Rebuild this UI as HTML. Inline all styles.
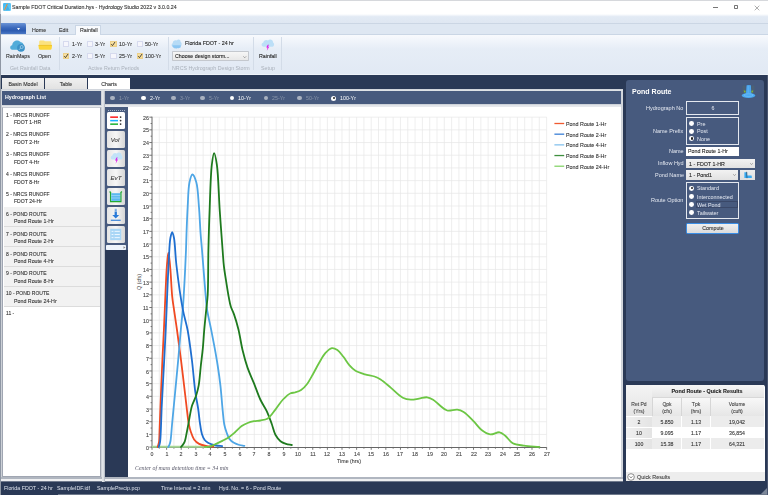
<!DOCTYPE html><html><head><meta charset="utf-8"><style>html,body{margin:0;padding:0;width:768px;height:495px;overflow:hidden;position:relative;background:#2a3956}</style></head><body><div style="position:absolute;left:0px;top:0px;width:768px;height:14px;background:#fff;border-top:0.8px solid #d6d8dc;border-left:0.8px solid #c8ccd2;box-sizing:border-box"></div>
<div style="position:absolute;left:0px;top:14px;width:768px;height:9px;background:linear-gradient(#fff 0%,#e2eaf4 30%,#dfe7f2 100%)"></div>
<svg style="position:absolute;left:3px;top:2.6px" width="8" height="8" viewBox="0 0 8 8"><defs><linearGradient id="ig" x1="0" y1="0" x2="1" y2="1"><stop offset="0" stop-color="#3fb6f2"/><stop offset="1" stop-color="#6fd0f8"/></linearGradient></defs><rect x="0" y="0" width="8" height="8" rx="1.2" fill="url(#ig)"/><path d="M4.4 2.6 L7 7.2 L2.6 7.2 Z" fill="#2a9ee0" opacity="0.55"/><path d="M1.7 6.8 L4.2 1.2" stroke="#f08a2a" stroke-width="1" stroke-linecap="round"/></svg>
<div style="position:absolute;left:12px;top:4.67px;font-size:5.27px;line-height:5.27px;color:#333;font-weight:normal;white-space:pre;font-family:'Liberation Sans', sans-serif;will-change:transform;-webkit-text-stroke:0.1px #333;">Sample FDOT Critical Duration.hys - Hydrology Studio 2022 v 3.0.0.24</div>
<div style="position:absolute;left:713px;top:6.5px;width:5px;height:0.6px;background:#777"></div>
<div style="position:absolute;left:734px;top:5px;width:4.4px;height:4.4px;border:0.6px solid #777;box-sizing:border-box;border-radius:0.8px"></div>
<svg style="position:absolute;left:754px;top:4.5px" width="6" height="6" viewBox="0 0 6 6"><path d="M0.7 0.7 L5.3 5.3 M5.3 0.7 L0.7 5.3" stroke="#777" stroke-width="0.6"/></svg>
<div style="position:absolute;left:0px;top:23px;width:768px;height:12px;background:#dee7f2;border-top:0.7px solid #cbd6e4;box-sizing:border-box"></div>
<div style="position:absolute;left:0px;top:34.3px;width:768px;height:0.8px;background:#cad6e5"></div>
<div style="position:absolute;left:0px;top:23.2px;width:26px;height:10.5px;background:linear-gradient(#6a93d6 0%,#3a68bb 45%,#2d5bb0 70%,#4a77c5 100%);border-radius:0 1.5px 0 0"></div>
<svg style="position:absolute;left:16.8px;top:28px" width="3" height="2.2" viewBox="0 0 3 2.2"><path d="M0 0 L3 0 L1.5 2.2 Z" fill="#fff"/></svg>
<div style="position:absolute;left:32px;top:28.25px;font-size:5.3px;line-height:5.3px;color:#333;font-weight:normal;white-space:pre;font-family:'Liberation Sans', sans-serif;will-change:transform;-webkit-text-stroke:0.1px #333;">Home</div>
<div style="position:absolute;left:58.8px;top:28.25px;font-size:5.3px;line-height:5.3px;color:#333;font-weight:normal;white-space:pre;font-family:'Liberation Sans', sans-serif;will-change:transform;-webkit-text-stroke:0.1px #333;">Edit</div>
<div style="position:absolute;left:75px;top:24.5px;width:26.3px;height:10.8px;background:#f8fafd;border:0.6px solid #cad6e5;border-bottom:none;box-sizing:border-box"></div>
<div style="position:absolute;left:79.5px;top:28.25px;font-size:5.3px;line-height:5.3px;color:#333;font-weight:normal;white-space:pre;font-family:'Liberation Sans', sans-serif;will-change:transform;-webkit-text-stroke:0.1px #333;">Rainfall</div>
<div style="position:absolute;left:0px;top:35px;width:768px;height:40px;background:linear-gradient(#f8fafd 0%,#e6edf6 35%,#e1e9f4 100%)"></div>
<div style="position:absolute;left:0px;top:74.4px;width:768px;height:0.6px;background:#eef3f9"></div>
<div style="position:absolute;left:59px;top:37px;width:0.6px;height:33px;background:#d3dce8"></div>
<div style="position:absolute;left:167.7px;top:37px;width:0.6px;height:33px;background:#d3dce8"></div>
<div style="position:absolute;left:253.3px;top:37px;width:0.6px;height:33px;background:#d3dce8"></div>
<div style="position:absolute;left:281.2px;top:37px;width:0.6px;height:33px;background:#d3dce8"></div>
<svg style="position:absolute;left:9px;top:39px" width="17" height="14" viewBox="0 0 17 14"><path d="M3.2 10.8 C0.6 10.8 0.4 6.6 3.2 6.2 C3.4 2.2 8.6 -0.2 11.8 3.2 C13.6 3.4 14.8 5 14.6 7 L11 10.8 Z" fill="#52acd9"/><circle cx="12" cy="8.8" r="3.9" fill="#3b92c8"/><circle cx="12.7" cy="8" r="1.5" fill="none" stroke="#cfe9f7" stroke-width="0.55"/><path d="M11.6 9.1 L10 10.8" stroke="#cfe9f7" stroke-width="0.6"/></svg>
<div style="position:absolute;left:5.5px;top:54.15px;font-size:5.3px;line-height:5.3px;color:#333;font-weight:normal;white-space:pre;font-family:'Liberation Sans', sans-serif;will-change:transform;-webkit-text-stroke:0.1px #333;">RainMaps</div>
<svg style="position:absolute;left:37.5px;top:39.5px" width="14.5" height="10.5" viewBox="0 0 14.5 10.5"><path d="M1.2 1.6 Q1.2 0.4 2.4 0.4 L5.6 0.4 Q6.4 0.4 6.8 1.2 L12.2 1.2 Q13.4 1.2 13.4 2.4 L13.4 6 L1.2 6 Z" fill="#fbe27e"/><path d="M0.4 5.6 Q0.4 5 1 5 L13.6 5 Q14.2 5 14.1 5.6 L13.6 8.8 Q13.4 9.8 12.4 9.8 L2.2 9.8 Q1.1 9.8 0.9 8.8 Z" fill="#fcd63a"/><path d="M0.6 5.4 L13.9 5.4" stroke="#e8bc2a" stroke-width="0.7"/></svg>
<div style="position:absolute;left:38.2px;top:54.15px;font-size:5.3px;line-height:5.3px;color:#333;font-weight:normal;white-space:pre;font-family:'Liberation Sans', sans-serif;will-change:transform;-webkit-text-stroke:0.1px #333;">Open</div>
<div style="position:absolute;left:10px;top:65.75px;font-size:5.3px;line-height:5.3px;color:#a9b0ba;font-weight:normal;white-space:pre;font-family:'Liberation Sans', sans-serif;will-change:transform;-webkit-text-stroke:0.0px #a9b0ba;">Get Rainfall Data</div>
<div style="position:absolute;left:63px;top:40.65px;width:6.2px;height:6.2px;background:#f6f6fc;border:0.6px solid #d6daee;box-sizing:border-box"></div>
<div style="position:absolute;left:71.6px;top:41.70px;font-size:5.3px;line-height:5.3px;color:#333;font-weight:normal;white-space:pre;font-family:'Liberation Sans', sans-serif;will-change:transform;-webkit-text-stroke:0.1px #333;">1-Yr</div>
<div style="position:absolute;left:87px;top:40.65px;width:6.2px;height:6.2px;background:#f6f6fc;border:0.6px solid #d6daee;box-sizing:border-box"></div>
<div style="position:absolute;left:94.75px;top:41.70px;font-size:5.3px;line-height:5.3px;color:#333;font-weight:normal;white-space:pre;font-family:'Liberation Sans', sans-serif;will-change:transform;-webkit-text-stroke:0.1px #333;">3-Yr</div>
<div style="position:absolute;left:110.4px;top:40.65px;width:6.2px;height:6.2px;background:linear-gradient(#f8e2a6,#f4d890);border:0.5px solid #ecd08a;box-sizing:border-box"></div>
<svg style="position:absolute;left:110.4px;top:40.75px" width="6" height="6" viewBox="0 0 6 6"><path d="M1.2 3.2 L2.5 4.6 L5 1" fill="none" stroke="#222" stroke-width="0.8"/></svg>
<div style="position:absolute;left:118.5px;top:41.70px;font-size:5.3px;line-height:5.3px;color:#333;font-weight:normal;white-space:pre;font-family:'Liberation Sans', sans-serif;will-change:transform;-webkit-text-stroke:0.1px #333;">10-Yr</div>
<div style="position:absolute;left:137px;top:40.65px;width:6.2px;height:6.2px;background:#f6f6fc;border:0.6px solid #d6daee;box-sizing:border-box"></div>
<div style="position:absolute;left:144.75px;top:41.70px;font-size:5.3px;line-height:5.3px;color:#333;font-weight:normal;white-space:pre;font-family:'Liberation Sans', sans-serif;will-change:transform;-webkit-text-stroke:0.1px #333;">50-Yr</div>
<div style="position:absolute;left:63px;top:53.3px;width:6.2px;height:6.2px;background:linear-gradient(#f8e2a6,#f4d890);border:0.5px solid #ecd08a;box-sizing:border-box"></div>
<svg style="position:absolute;left:63px;top:53.4px" width="6" height="6" viewBox="0 0 6 6"><path d="M1.2 3.2 L2.5 4.6 L5 1" fill="none" stroke="#222" stroke-width="0.8"/></svg>
<div style="position:absolute;left:71.6px;top:54.35px;font-size:5.3px;line-height:5.3px;color:#333;font-weight:normal;white-space:pre;font-family:'Liberation Sans', sans-serif;will-change:transform;-webkit-text-stroke:0.1px #333;">2-Yr</div>
<div style="position:absolute;left:87px;top:53.3px;width:6.2px;height:6.2px;background:#f6f6fc;border:0.6px solid #d6daee;box-sizing:border-box"></div>
<div style="position:absolute;left:94.75px;top:54.35px;font-size:5.3px;line-height:5.3px;color:#333;font-weight:normal;white-space:pre;font-family:'Liberation Sans', sans-serif;will-change:transform;-webkit-text-stroke:0.1px #333;">5-Yr</div>
<div style="position:absolute;left:110.4px;top:53.3px;width:6.2px;height:6.2px;background:#f6f6fc;border:0.6px solid #d6daee;box-sizing:border-box"></div>
<div style="position:absolute;left:118.5px;top:54.35px;font-size:5.3px;line-height:5.3px;color:#333;font-weight:normal;white-space:pre;font-family:'Liberation Sans', sans-serif;will-change:transform;-webkit-text-stroke:0.1px #333;">25-Yr</div>
<div style="position:absolute;left:137px;top:53.3px;width:6.2px;height:6.2px;background:linear-gradient(#f8e2a6,#f4d890);border:0.5px solid #ecd08a;box-sizing:border-box"></div>
<svg style="position:absolute;left:137px;top:53.4px" width="6" height="6" viewBox="0 0 6 6"><path d="M1.2 3.2 L2.5 4.6 L5 1" fill="none" stroke="#222" stroke-width="0.8"/></svg>
<div style="position:absolute;left:144.75px;top:54.35px;font-size:5.3px;line-height:5.3px;color:#333;font-weight:normal;white-space:pre;font-family:'Liberation Sans', sans-serif;will-change:transform;-webkit-text-stroke:0.1px #333;">100-Yr</div>
<div style="position:absolute;left:88px;top:65.75px;font-size:5.3px;line-height:5.3px;color:#a9b0ba;font-weight:normal;white-space:pre;font-family:'Liberation Sans', sans-serif;will-change:transform;-webkit-text-stroke:0.0px #a9b0ba;">Active Return Periods</div>
<svg style="position:absolute;left:171.3px;top:38.5px" width="11" height="10.5" viewBox="0 0 11 10.5"><path d="M2.2 7.8 C0.2 7.6 0.2 4.6 1.8 4.2 C1.6 1.6 4.4 0.4 5.8 1.6 C7 -0.2 9.8 0.6 9.6 3 C11 3.4 11 6.6 9.4 7.8 Z" fill="#b6dbf6"/><path d="M1.4 6.2 L9.8 6.2 L9.6 8.2 Q9.2 9.2 8.4 8.8 Q7.6 9.8 6.6 9 Q5.6 10 4.6 9.2 Q3.6 9.8 3 8.8 Q2 9 1.8 8 Z" fill="#8cc6f2"/></svg>
<div style="position:absolute;left:184.6px;top:40.75px;font-size:5.3px;line-height:5.3px;color:#222;font-weight:normal;white-space:pre;font-family:'Liberation Sans', sans-serif;will-change:transform;-webkit-text-stroke:0.1px #222;">Florida FDOT - 24 hr</div>
<div style="position:absolute;left:172.4px;top:51.4px;width:76.4px;height:9.6px;background:linear-gradient(#f6f6f6,#e8e8e8);border:0.6px solid #c4c8ce;box-sizing:border-box;border-radius:0.8px"></div>
<div style="position:absolute;left:175px;top:54.25px;font-size:5.3px;line-height:5.3px;color:#222;font-weight:normal;white-space:pre;font-family:'Liberation Sans', sans-serif;will-change:transform;-webkit-text-stroke:0.1px #222;">Choose design storm...</div>
<svg style="position:absolute;left:243.2px;top:55.6px" width="3.5" height="2.2" viewBox="0 0 3.5 2.2"><path d="M0.3 0.3 L1.75 1.8 L3.2 0.3" fill="none" stroke="#777" stroke-width="0.6"/></svg>
<div style="position:absolute;left:172.3px;top:65.75px;font-size:5.3px;line-height:5.3px;color:#a9b0ba;font-weight:normal;white-space:pre;font-family:'Liberation Sans', sans-serif;will-change:transform;-webkit-text-stroke:0.0px #a9b0ba;">NRCS Hydrograph Design Storm</div>
<svg style="position:absolute;left:261px;top:38.5px" width="13.5" height="12.5" viewBox="0 0 13.5 12.5"><path d="M2.6 7.8 C0 7.6 0 4.2 2.2 3.8 C2.4 1.2 5.6 0.2 7 1.6 C8.6 -0.6 12.4 0.6 12 3.6 C13.6 4.2 13.4 7.6 11.4 7.8 Z" fill="#bcdff7"/><path d="M6.8 5.8 L5.2 8.6 L6.6 8.6 L5.8 11.8 L8.2 7.8 L6.8 7.8 L8 5.8 Z" fill="#e012e8"/></svg>
<div style="position:absolute;left:258.8px;top:54.35px;font-size:5.3px;line-height:5.3px;color:#222;font-weight:normal;white-space:pre;font-family:'Liberation Sans', sans-serif;will-change:transform;-webkit-text-stroke:0.1px #222;">Rainfall</div>
<div style="position:absolute;left:261px;top:65.75px;font-size:5.3px;line-height:5.3px;color:#a9b0ba;font-weight:normal;white-space:pre;font-family:'Liberation Sans', sans-serif;will-change:transform;-webkit-text-stroke:0.0px #a9b0ba;">Setup</div>
<div style="position:absolute;left:0px;top:75px;width:768px;height:420px;background:#2a3956"></div>
<div style="position:absolute;left:1.8px;top:78px;width:41.9px;height:11px;background:linear-gradient(#f0f0f0,#e2e2e2)"></div>
<div style="position:absolute;left:-77.25px;width:200px;text-align:center;top:81.95px;font-size:5.3px;line-height:5.3px;color:#333;font-weight:normal;white-space:pre;font-family:'Liberation Sans', sans-serif;will-change:transform;-webkit-text-stroke:0.1px #333;">Basin Model</div>
<div style="position:absolute;left:45px;top:78px;width:41.6px;height:11px;background:linear-gradient(#f0f0f0,#e2e2e2)"></div>
<div style="position:absolute;left:-34.2px;width:200px;text-align:center;top:81.95px;font-size:5.3px;line-height:5.3px;color:#333;font-weight:normal;white-space:pre;font-family:'Liberation Sans', sans-serif;will-change:transform;-webkit-text-stroke:0.1px #333;">Table</div>
<div style="position:absolute;left:88px;top:78px;width:41.8px;height:11px;background:#fff"></div>
<div style="position:absolute;left:8.900000000000006px;width:200px;text-align:center;top:81.95px;font-size:5.3px;line-height:5.3px;color:#333;font-weight:normal;white-space:pre;font-family:'Liberation Sans', sans-serif;will-change:transform;-webkit-text-stroke:0.1px #333;">Charts</div>
<div style="position:absolute;left:0px;top:88.7px;width:623px;height:2.4px;background:linear-gradient(#c4c9d1,#e4e7eb 60%,#d6dadf)"></div>
<div style="position:absolute;left:1.8px;top:91px;width:100px;height:13.7px;background:#475a7e"></div>
<div style="position:absolute;left:5px;top:95.45px;font-size:5.3px;line-height:5.3px;color:#fff;font-weight:bold;white-space:pre;font-family:'Liberation Sans', sans-serif;will-change:transform;-webkit-text-stroke:0.0px #fff;">Hydrograph List</div>
<div style="position:absolute;left:101.3px;top:91px;width:3.3px;height:390.5px;background:linear-gradient(90deg,#c4c9d1,#eceef1 50%,#a9b0bb)"></div>
<div style="position:absolute;left:0px;top:104.5px;width:102px;height:2.5px;background:linear-gradient(#c4c9d1,#e2e5e9 50%,#e8eaed)"></div>
<div style="position:absolute;left:0px;top:88.7px;width:1.8px;height:393px;background:linear-gradient(90deg,#a9b0bb,#d8dbe0)"></div>
<div style="position:absolute;left:1.8px;top:107px;width:99.7px;height:370px;background:#fff;border:0.8px solid #a0a6b2;border-top-color:#c8ccd3;box-sizing:border-box"></div>
<div style="position:absolute;left:6px;top:112.60px;font-size:5.0px;line-height:5.0px;color:#333;font-weight:normal;white-space:pre;font-family:'Liberation Sans', sans-serif;will-change:transform;-webkit-text-stroke:0.1px #333;">1 - NRCS RUNOFF</div>
<div style="position:absolute;left:13.7px;top:119.95px;font-size:5.1px;line-height:5.1px;color:#333;font-weight:normal;white-space:pre;font-family:'Liberation Sans', sans-serif;will-change:transform;-webkit-text-stroke:0.1px #333;">FDOT 1-HR</div>
<div style="position:absolute;left:6px;top:132.45px;font-size:5.0px;line-height:5.0px;color:#333;font-weight:normal;white-space:pre;font-family:'Liberation Sans', sans-serif;will-change:transform;-webkit-text-stroke:0.1px #333;">2 - NRCS RUNOFF</div>
<div style="position:absolute;left:13.7px;top:139.80px;font-size:5.1px;line-height:5.1px;color:#333;font-weight:normal;white-space:pre;font-family:'Liberation Sans', sans-serif;will-change:transform;-webkit-text-stroke:0.1px #333;">FDOT 2-Hr</div>
<div style="position:absolute;left:6px;top:152.30px;font-size:5.0px;line-height:5.0px;color:#333;font-weight:normal;white-space:pre;font-family:'Liberation Sans', sans-serif;will-change:transform;-webkit-text-stroke:0.1px #333;">3 - NRCS RUNOFF</div>
<div style="position:absolute;left:13.7px;top:159.65px;font-size:5.1px;line-height:5.1px;color:#333;font-weight:normal;white-space:pre;font-family:'Liberation Sans', sans-serif;will-change:transform;-webkit-text-stroke:0.1px #333;">FDOT 4-Hr</div>
<div style="position:absolute;left:6px;top:172.15px;font-size:5.0px;line-height:5.0px;color:#333;font-weight:normal;white-space:pre;font-family:'Liberation Sans', sans-serif;will-change:transform;-webkit-text-stroke:0.1px #333;">4 - NRCS RUNOFF</div>
<div style="position:absolute;left:13.7px;top:179.50px;font-size:5.1px;line-height:5.1px;color:#333;font-weight:normal;white-space:pre;font-family:'Liberation Sans', sans-serif;will-change:transform;-webkit-text-stroke:0.1px #333;">FDOT 8-Hr</div>
<div style="position:absolute;left:6px;top:192.00px;font-size:5.0px;line-height:5.0px;color:#333;font-weight:normal;white-space:pre;font-family:'Liberation Sans', sans-serif;will-change:transform;-webkit-text-stroke:0.1px #333;">5 - NRCS RUNOFF</div>
<div style="position:absolute;left:13.7px;top:199.35px;font-size:5.1px;line-height:5.1px;color:#333;font-weight:normal;white-space:pre;font-family:'Liberation Sans', sans-serif;will-change:transform;-webkit-text-stroke:0.1px #333;">FDOT 24-Hr</div>
<div style="position:absolute;left:4px;top:207.4px;width:96px;height:19.83px;background:#f2f2f2;border-bottom:0.7px solid #dcdcdc;box-sizing:border-box"></div>
<div style="position:absolute;left:6px;top:211.85px;font-size:5.0px;line-height:5.0px;color:#333;font-weight:normal;white-space:pre;font-family:'Liberation Sans', sans-serif;will-change:transform;-webkit-text-stroke:0.1px #333;">6 - POND ROUTE</div>
<div style="position:absolute;left:13.7px;top:219.10px;font-size:5.3px;line-height:5.3px;color:#333;font-weight:normal;white-space:pre;font-family:'Liberation Sans', sans-serif;will-change:transform;-webkit-text-stroke:0.1px #333;">Pond Route 1-Hr</div>
<div style="position:absolute;left:4px;top:227.23000000000002px;width:96px;height:19.83px;background:#f2f2f2;border-bottom:0.7px solid #dcdcdc;box-sizing:border-box"></div>
<div style="position:absolute;left:6px;top:231.70px;font-size:5.0px;line-height:5.0px;color:#333;font-weight:normal;white-space:pre;font-family:'Liberation Sans', sans-serif;will-change:transform;-webkit-text-stroke:0.1px #333;">7 - POND ROUTE</div>
<div style="position:absolute;left:13.7px;top:238.95px;font-size:5.3px;line-height:5.3px;color:#333;font-weight:normal;white-space:pre;font-family:'Liberation Sans', sans-serif;will-change:transform;-webkit-text-stroke:0.1px #333;">Pond Route 2-Hr</div>
<div style="position:absolute;left:4px;top:247.06px;width:96px;height:19.83px;background:#f2f2f2;border-bottom:0.7px solid #dcdcdc;box-sizing:border-box"></div>
<div style="position:absolute;left:6px;top:251.55px;font-size:5.0px;line-height:5.0px;color:#333;font-weight:normal;white-space:pre;font-family:'Liberation Sans', sans-serif;will-change:transform;-webkit-text-stroke:0.1px #333;">8 - POND ROUTE</div>
<div style="position:absolute;left:13.7px;top:258.80px;font-size:5.3px;line-height:5.3px;color:#333;font-weight:normal;white-space:pre;font-family:'Liberation Sans', sans-serif;will-change:transform;-webkit-text-stroke:0.1px #333;">Pond Route 4-Hr</div>
<div style="position:absolute;left:4px;top:266.89px;width:96px;height:19.83px;background:#f2f2f2;border-bottom:0.7px solid #dcdcdc;box-sizing:border-box"></div>
<div style="position:absolute;left:6px;top:271.40px;font-size:5.0px;line-height:5.0px;color:#333;font-weight:normal;white-space:pre;font-family:'Liberation Sans', sans-serif;will-change:transform;-webkit-text-stroke:0.1px #333;">9 - POND ROUTE</div>
<div style="position:absolute;left:13.7px;top:278.65px;font-size:5.3px;line-height:5.3px;color:#333;font-weight:normal;white-space:pre;font-family:'Liberation Sans', sans-serif;will-change:transform;-webkit-text-stroke:0.1px #333;">Pond Route 8-Hr</div>
<div style="position:absolute;left:4px;top:286.72px;width:96px;height:19.83px;background:#f2f2f2;border-bottom:0.7px solid #dcdcdc;box-sizing:border-box"></div>
<div style="position:absolute;left:6px;top:291.25px;font-size:5.0px;line-height:5.0px;color:#333;font-weight:normal;white-space:pre;font-family:'Liberation Sans', sans-serif;will-change:transform;-webkit-text-stroke:0.1px #333;">10 - POND ROUTE</div>
<div style="position:absolute;left:13.7px;top:298.50px;font-size:5.3px;line-height:5.3px;color:#333;font-weight:normal;white-space:pre;font-family:'Liberation Sans', sans-serif;will-change:transform;-webkit-text-stroke:0.1px #333;">Pond Route 24-Hr</div>
<div style="position:absolute;left:6px;top:310.90px;font-size:5.0px;line-height:5.0px;color:#333;font-weight:normal;white-space:pre;font-family:'Liberation Sans', sans-serif;will-change:transform;-webkit-text-stroke:0.1px #333;">11 -</div>
<div style="position:absolute;left:0px;top:477px;width:102px;height:5.4px;background:linear-gradient(#b0b6c0 0%,#b0b6c0 35%,#eeeff1 45%,#eeeff1 72%,#2a3956 100%)"></div>
<div style="position:absolute;left:104.7px;top:91px;width:516.1px;height:13.4px;background:#475a7e"></div>
<div style="position:absolute;left:104.6px;top:104.4px;width:518.3px;height:2.6px;background:linear-gradient(#c4c9d1,#e2e5e9 50%,#e8eaed)"></div>
<div style="position:absolute;left:620.6px;top:91px;width:2.3px;height:390px;background:linear-gradient(90deg,#b8bec8,#eceef1 60%,#a9b0bb)"></div>
<div style="position:absolute;left:110.2px;top:95.7px;width:4.6px;height:4.6px;border-radius:50%;background:#a9b1c0"></div>
<div style="position:absolute;left:118.7px;top:96.05px;font-size:5.3px;line-height:5.3px;color:#8c97ab;font-weight:normal;white-space:pre;font-family:'Liberation Sans', sans-serif;will-change:transform;-webkit-text-stroke:0.0px #8c97ab;">1-Yr</div>
<div style="position:absolute;left:141.45px;top:95.7px;width:4.6px;height:4.6px;border-radius:50%;background:#fff"></div>
<div style="position:absolute;left:149.95px;top:96.05px;font-size:5.3px;line-height:5.3px;color:#fff;font-weight:normal;white-space:pre;font-family:'Liberation Sans', sans-serif;will-change:transform;-webkit-text-stroke:0.0px #fff;">2-Yr</div>
<div style="position:absolute;left:171.0px;top:95.7px;width:4.6px;height:4.6px;border-radius:50%;background:#a9b1c0"></div>
<div style="position:absolute;left:179.5px;top:96.05px;font-size:5.3px;line-height:5.3px;color:#8c97ab;font-weight:normal;white-space:pre;font-family:'Liberation Sans', sans-serif;will-change:transform;-webkit-text-stroke:0.0px #8c97ab;">3-Yr</div>
<div style="position:absolute;left:200.29999999999998px;top:95.7px;width:4.6px;height:4.6px;border-radius:50%;background:#a9b1c0"></div>
<div style="position:absolute;left:208.79999999999998px;top:96.05px;font-size:5.3px;line-height:5.3px;color:#8c97ab;font-weight:normal;white-space:pre;font-family:'Liberation Sans', sans-serif;will-change:transform;-webkit-text-stroke:0.0px #8c97ab;">5-Yr</div>
<div style="position:absolute;left:229.7px;top:95.7px;width:4.6px;height:4.6px;border-radius:50%;background:#fff"></div>
<div style="position:absolute;left:238.2px;top:96.05px;font-size:5.3px;line-height:5.3px;color:#fff;font-weight:normal;white-space:pre;font-family:'Liberation Sans', sans-serif;will-change:transform;-webkit-text-stroke:0.0px #fff;">10-Yr</div>
<div style="position:absolute;left:263.7px;top:95.7px;width:4.6px;height:4.6px;border-radius:50%;background:#a9b1c0"></div>
<div style="position:absolute;left:272.2px;top:96.05px;font-size:5.3px;line-height:5.3px;color:#8c97ab;font-weight:normal;white-space:pre;font-family:'Liberation Sans', sans-serif;will-change:transform;-webkit-text-stroke:0.0px #8c97ab;">25-Yr</div>
<div style="position:absolute;left:297.2px;top:95.7px;width:4.6px;height:4.6px;border-radius:50%;background:#a9b1c0"></div>
<div style="position:absolute;left:305.7px;top:96.05px;font-size:5.3px;line-height:5.3px;color:#8c97ab;font-weight:normal;white-space:pre;font-family:'Liberation Sans', sans-serif;will-change:transform;-webkit-text-stroke:0.0px #8c97ab;">50-Yr</div>
<div style="position:absolute;left:331.25px;top:95.5px;width:5px;height:5px;border-radius:50%;background:#fff"></div>
<div style="position:absolute;left:332.6px;top:96.85px;width:2.3px;height:2.3px;border-radius:50%;background:#222"></div>
<div style="position:absolute;left:339.95px;top:96.05px;font-size:5.3px;line-height:5.3px;color:#fff;font-weight:normal;white-space:pre;font-family:'Liberation Sans', sans-serif;will-change:transform;-webkit-text-stroke:0.0px #fff;">100-Yr</div>
<div style="position:absolute;left:104.5px;top:107px;width:23.2px;height:143.2px;background:#475a7e"></div>
<div style="position:absolute;left:107.5px;top:110px;width:17px;height:0;border-top:0.7px dotted #a8b4c8"></div>
<div style="position:absolute;left:107px;top:112px;width:17.5px;height:17px;background:#fff;border-radius:1.5px"></div>
<div style="position:absolute;left:107px;top:131px;width:17.5px;height:17px;background:linear-gradient(90deg,#e4e4e4,#f6f6f6 50%,#d6d6d6);border-radius:1.5px"></div>
<div style="position:absolute;left:107px;top:150px;width:17.5px;height:17px;background:linear-gradient(90deg,#e4e4e4,#f6f6f6 50%,#d6d6d6);border-radius:1.5px"></div>
<div style="position:absolute;left:107px;top:169px;width:17.5px;height:17px;background:linear-gradient(90deg,#e4e4e4,#f6f6f6 50%,#d6d6d6);border-radius:1.5px"></div>
<div style="position:absolute;left:107px;top:188px;width:17.5px;height:17px;background:linear-gradient(90deg,#e4e4e4,#f6f6f6 50%,#d6d6d6);border-radius:1.5px"></div>
<div style="position:absolute;left:107px;top:207px;width:17.5px;height:17px;background:linear-gradient(90deg,#e4e4e4,#f6f6f6 50%,#d6d6d6);border-radius:1.5px"></div>
<div style="position:absolute;left:107px;top:226px;width:17.5px;height:17px;background:linear-gradient(90deg,#e4e4e4,#f6f6f6 50%,#d6d6d6);border-radius:1.5px"></div>
<svg style="position:absolute;left:107px;top:112px" width="17.5" height="17" viewBox="0 0 17.5 17"><rect x="3.2" y="4.4" width="7.8" height="1.5" fill="#ff1a1a"/><rect x="3.2" y="7.9" width="7.8" height="1.5" fill="#1ab0ff"/><rect x="3.2" y="11.4" width="7.8" height="1.5" fill="#1ab030"/><circle cx="13.6" cy="5.1" r="0.9" fill="#333"/><circle cx="13.6" cy="8.6" r="0.9" fill="#333"/><circle cx="13.6" cy="12.1" r="0.9" fill="#333"/></svg>
<div style="position:absolute;left:15px;width:200px;text-align:center;top:137.40px;font-size:6.0px;line-height:6.0px;color:#3a3a3a;font-weight:normal;white-space:pre;font-family:'Liberation Sans', sans-serif;will-change:transform;-webkit-text-stroke:0.1px #3a3a3a;font-style:italic">Vol</div>
<svg style="position:absolute;left:109.5px;top:151px" width="13" height="14" viewBox="0 0 13 14"><path d="M2.6 8.6 C0.2 8.4 0.2 5.2 2.2 4.8 C2.4 2.2 5.4 1.2 6.8 2.6 C8.2 0.4 11.8 1.4 11.6 4.4 C13 4.8 12.8 8.4 10.8 8.6 Z" fill="#c2e2f8"/><path d="M6.6 6.4 L5 9.4 L6.4 9.4 L5.6 12.8 L8 8.6 L6.6 8.6 L7.8 6.4 Z" fill="#d818e8"/></svg>
<div style="position:absolute;left:15.75px;width:200px;text-align:center;top:175.10px;font-size:6.2px;line-height:6.2px;color:#3a3a3a;font-weight:normal;white-space:pre;font-family:'Liberation Sans', sans-serif;will-change:transform;-webkit-text-stroke:0.1px #3a3a3a;font-style:italic">EvT</div>
<svg style="position:absolute;left:107px;top:188px" width="17.5" height="17" viewBox="0 0 17.5 17"><path d="M2.6 3.5 L3.6 4.5 L3.6 13.6 L13.9 13.6 L13.9 4.5 L14.9 3.5" fill="none" stroke="#22aa33" stroke-width="1.3"/><rect x="4.3" y="5.2" width="8.9" height="7.7" fill="#5ab8f0"/><path d="M4.3 7.6 H13.2 M4.3 10 H13.2" stroke="#bfe6fb" stroke-width="0.6"/></svg>
<svg style="position:absolute;left:107px;top:207px" width="17.5" height="17" viewBox="0 0 17.5 17"><path d="M7.7 2.3 H9.8 M7.7 3.6 H9.8" stroke="#2a7ad8" stroke-width="0.7"/><path d="M7.6 4.6 H9.9 V8 H12.2 L8.75 11.6 L5.3 8 H7.6 Z" fill="#2a7ad8"/><rect x="3.8" y="12.7" width="9.9" height="1.1" fill="#2a7ad8"/></svg>
<svg style="position:absolute;left:107px;top:226px" width="17.5" height="17" viewBox="0 0 17.5 17"><rect x="3.2" y="2.8" width="11.1" height="11.4" fill="#a9d6f6"/><path d="M4.6 5.4 H6.4 M7.6 5.4 H12.8 M4.6 8.5 H6.4 M7.6 8.5 H12.8 M4.6 11.6 H6.4 M7.6 11.6 H12.8" stroke="#eaf6ff" stroke-width="1"/></svg>
<div style="position:absolute;left:106px;top:245px;width:20.1px;height:4.8px;background:#eef4fc;border-radius:0.8px"></div>
<svg style="position:absolute;left:122.5px;top:246px" width="3" height="3" viewBox="0 0 3 3"><path d="M0.5 0.3 L2.5 1.5 L0.5 2.7 Z" fill="#888"/></svg>
<div style="position:absolute;left:127.7px;top:107px;width:493.1px;height:370px;background:#fff"></div>
<div style="position:absolute;left:104.6px;top:477px;width:518.3px;height:5.4px;background:linear-gradient(#b0b6c0 0%,#b0b6c0 35%,#eeeff1 45%,#eeeff1 72%,#2a3956 100%)"></div>
<svg style="position:absolute;left:0;top:0" width="768" height="495" viewBox="0 0 768 495"><path d="M159.31 117.16V447.10M166.62 117.16V447.10M173.92 117.16V447.10M181.23 117.16V447.10M188.54 117.16V447.10M195.84 117.16V447.10M203.15 117.16V447.10M210.46 117.16V447.10M217.77 117.16V447.10M225.07 117.16V447.10M232.38 117.16V447.10M239.69 117.16V447.10M247.00 117.16V447.10M254.31 117.16V447.10M261.61 117.16V447.10M268.92 117.16V447.10M276.23 117.16V447.10M283.53 117.16V447.10M290.84 117.16V447.10M298.15 117.16V447.10M305.46 117.16V447.10M312.76 117.16V447.10M320.07 117.16V447.10M327.38 117.16V447.10M334.69 117.16V447.10M342.00 117.16V447.10M349.30 117.16V447.10M356.61 117.16V447.10M363.92 117.16V447.10M371.23 117.16V447.10M378.53 117.16V447.10M385.84 117.16V447.10M393.15 117.16V447.10M400.46 117.16V447.10M407.76 117.16V447.10M415.07 117.16V447.10M422.38 117.16V447.10M429.69 117.16V447.10M436.99 117.16V447.10M444.30 117.16V447.10M451.61 117.16V447.10M458.92 117.16V447.10M466.22 117.16V447.10M473.53 117.16V447.10M480.84 117.16V447.10M488.14 117.16V447.10M495.45 117.16V447.10M502.76 117.16V447.10M510.07 117.16V447.10M517.38 117.16V447.10M524.68 117.16V447.10M531.99 117.16V447.10M539.30 117.16V447.10M546.61 117.16V447.10M152.00 434.41H546.61M152.00 421.72H546.61M152.00 409.03H546.61M152.00 396.34H546.61M152.00 383.65H546.61M152.00 370.96H546.61M152.00 358.27H546.61M152.00 345.58H546.61M152.00 332.89H546.61M152.00 320.20H546.61M152.00 307.51H546.61M152.00 294.82H546.61M152.00 282.13H546.61M152.00 269.44H546.61M152.00 256.75H546.61M152.00 244.06H546.61M152.00 231.37H546.61M152.00 218.68H546.61M152.00 205.99H546.61M152.00 193.30H546.61M152.00 180.61H546.61M152.00 167.92H546.61M152.00 155.23H546.61M152.00 142.54H546.61M152.00 129.85H546.61M152.00 117.16H546.61" stroke="#e6e6e6" stroke-width="0.7" fill="none"/><path d="M149.30 447.10H152.00M149.30 434.41H152.00M149.30 421.72H152.00M149.30 409.03H152.00M149.30 396.34H152.00M149.30 383.65H152.00M149.30 370.96H152.00M149.30 358.27H152.00M149.30 345.58H152.00M149.30 332.89H152.00M149.30 320.20H152.00M149.30 307.51H152.00M149.30 294.82H152.00M149.30 282.13H152.00M149.30 269.44H152.00M149.30 256.75H152.00M149.30 244.06H152.00M149.30 231.37H152.00M149.30 218.68H152.00M149.30 205.99H152.00M149.30 193.30H152.00M149.30 180.61H152.00M149.30 167.92H152.00M149.30 155.23H152.00M149.30 142.54H152.00M149.30 129.85H152.00M149.30 117.16H152.00M150.60 440.75H152.00M150.60 428.06H152.00M150.60 415.38H152.00M150.60 402.69H152.00M150.60 390.00H152.00M150.60 377.31H152.00M150.60 364.62H152.00M150.60 351.93H152.00M150.60 339.24H152.00M150.60 326.55H152.00M150.60 313.86H152.00M150.60 301.17H152.00M150.60 288.48H152.00M150.60 275.79H152.00M150.60 263.10H152.00M150.60 250.41H152.00M150.60 237.72H152.00M150.60 225.03H152.00M150.60 212.34H152.00M150.60 199.65H152.00M150.60 186.96H152.00M150.60 174.27H152.00M150.60 161.58H152.00M150.60 148.89H152.00M150.60 136.20H152.00M150.60 123.51H152.00M152.00 447.10V449.80M166.62 447.10V449.80M181.23 447.10V449.80M195.84 447.10V449.80M210.46 447.10V449.80M225.07 447.10V449.80M239.69 447.10V449.80M254.31 447.10V449.80M268.92 447.10V449.80M283.53 447.10V449.80M298.15 447.10V449.80M312.76 447.10V449.80M327.38 447.10V449.80M342.00 447.10V449.80M356.61 447.10V449.80M371.23 447.10V449.80M385.84 447.10V449.80M400.46 447.10V449.80M415.07 447.10V449.80M429.69 447.10V449.80M444.30 447.10V449.80M458.92 447.10V449.80M473.53 447.10V449.80M488.14 447.10V449.80M502.76 447.10V449.80M517.38 447.10V449.80M531.99 447.10V449.80M546.61 447.10V449.80M159.31 447.10V448.70M173.92 447.10V448.70M188.54 447.10V448.70M203.15 447.10V448.70M217.77 447.10V448.70M232.38 447.10V448.70M247.00 447.10V448.70M261.61 447.10V448.70M276.23 447.10V448.70M290.84 447.10V448.70M305.46 447.10V448.70M320.07 447.10V448.70M334.69 447.10V448.70M349.30 447.10V448.70M363.92 447.10V448.70M378.53 447.10V448.70M393.15 447.10V448.70M407.76 447.10V448.70M422.38 447.10V448.70M436.99 447.10V448.70M451.61 447.10V448.70M466.22 447.10V448.70M480.84 447.10V448.70M495.45 447.10V448.70M510.07 447.10V448.70M524.68 447.10V448.70M539.30 447.10V448.70" stroke="#555" stroke-width="0.8" fill="none"/><path d="M152.00 116.66V447.50H546.61" stroke="#666" stroke-width="1" fill="none"/><path d="M152 446.7H207" stroke="#a6d894" stroke-width="1.9" fill="none"/><path d="M157.60 447.00C157.87 446.17 158.16 445.38 158.40 444.50C158.66 443.53 158.92 442.71 159.10 441.40C159.40 439.17 159.35 436.15 159.50 432.30C159.77 425.64 160.10 415.23 160.50 405.00C161.02 391.86 161.78 373.48 162.40 360.00C162.91 348.99 163.34 341.72 163.90 330.00C164.69 313.43 165.88 281.59 166.60 270.00C166.90 265.26 167.06 263.03 167.40 260.00C167.68 257.45 168.05 253.00 168.40 253.00C168.75 253.00 169.18 257.41 169.50 260.00C169.90 263.21 170.15 266.43 170.50 270.80C171.03 277.54 171.53 289.85 172.20 296.50C172.63 300.75 173.02 302.75 173.60 306.90C174.47 313.09 175.85 321.79 177.00 330.00C178.31 339.34 179.68 349.61 181.00 360.00C182.42 371.21 184.03 385.12 185.20 395.00C186.06 402.26 186.76 408.77 187.40 413.90C187.84 417.42 188.04 419.85 188.60 422.80C189.17 425.78 189.85 428.88 190.80 431.70C191.70 434.40 192.60 437.30 194.10 439.40C195.44 441.28 197.10 442.80 199.10 443.90C201.30 445.11 204.41 445.66 206.90 446.10C209.12 446.50 211.17 446.43 213.30 446.60" stroke="#f04a22" stroke-width="1.8" fill="none" stroke-linejoin="round" stroke-linecap="round"/><path d="M168.30 447.00C168.70 446.20 169.15 445.50 169.50 444.60C169.91 443.54 170.20 442.65 170.50 441.00C171.13 437.59 171.47 430.63 172.00 425.00C172.59 418.70 173.14 413.00 173.90 405.00C175.04 393.00 176.97 373.49 178.20 360.00C179.20 348.99 179.97 339.06 180.80 330.00C181.49 322.49 182.21 316.88 182.80 309.40C183.51 300.47 184.07 289.85 184.60 280.00C185.14 270.05 185.67 258.49 186.00 250.00C186.24 243.75 186.27 239.84 186.50 233.70C186.80 225.72 187.18 215.05 187.70 206.20C188.19 197.92 188.24 187.92 189.50 182.20C190.24 178.85 191.28 174.56 192.40 174.50C193.54 174.44 195.29 178.80 196.30 182.20C197.98 187.88 198.20 197.92 198.90 206.20C199.65 215.05 200.01 225.73 200.60 233.70C201.05 239.84 201.44 243.22 202.00 250.00C202.93 261.27 204.64 284.24 205.60 295.00C206.14 301.03 206.22 303.94 207.00 309.10C207.96 315.49 209.96 323.57 211.30 330.40C212.54 336.73 213.72 342.77 214.80 348.70C215.81 354.29 216.71 359.26 217.60 365.00C218.59 371.39 219.57 378.08 220.40 385.30C221.34 393.51 222.03 404.40 222.80 411.70C223.35 416.89 223.61 421.18 224.40 425.00C225.01 427.97 225.81 430.39 226.70 432.80C227.50 434.99 228.15 437.20 229.40 438.90C230.58 440.50 232.23 441.78 233.90 442.80C235.56 443.81 237.58 444.48 239.40 445.00C241.08 445.48 242.73 445.60 244.40 445.90" stroke="#4ea6e6" stroke-width="1.8" fill="none" stroke-linejoin="round" stroke-linecap="round"/><path d="M158.70 447.00C158.97 446.17 159.26 445.41 159.50 444.50C159.78 443.44 159.98 442.79 160.20 441.00C160.89 435.31 161.18 417.67 161.80 405.00C162.49 390.83 163.50 373.49 164.20 360.00C164.77 348.99 165.13 342.09 165.70 330.00C166.57 311.54 167.82 276.76 168.80 260.00C169.35 250.60 169.47 242.97 170.40 238.00C170.89 235.37 171.60 232.10 172.20 232.10C172.80 232.10 173.47 235.28 174.00 238.00C175.11 243.70 175.22 254.90 176.40 265.00C177.91 277.99 180.55 297.45 182.80 309.40C184.34 317.61 186.18 322.46 187.60 330.00C189.30 339.03 190.63 349.83 191.90 360.00C193.21 370.48 194.06 383.02 195.30 392.00C196.21 398.57 197.41 403.62 198.20 409.00C198.91 413.83 199.24 418.46 199.90 422.80C200.49 426.71 200.93 430.80 201.90 433.90C202.65 436.29 203.52 438.45 204.70 440.00C205.64 441.24 206.81 442.06 208.00 442.80C209.15 443.51 210.40 443.96 211.70 444.40C213.06 444.87 214.42 445.22 216.00 445.50C217.87 445.83 220.13 445.90 222.20 446.10" stroke="#1f6fd0" stroke-width="1.8" fill="none" stroke-linejoin="round" stroke-linecap="round"/><path d="M181.00 447.00C181.57 446.33 182.14 445.78 182.70 445.00C183.38 444.06 184.12 443.16 184.70 441.70C185.65 439.32 186.23 434.94 186.90 431.70C187.53 428.65 188.05 425.77 188.60 422.80C189.15 419.83 189.63 416.76 190.20 413.90C190.73 411.21 191.18 408.45 191.90 406.10C192.52 404.08 193.37 402.44 194.10 400.60C194.84 398.74 195.62 397.15 196.30 395.00C197.18 392.23 198.07 388.80 198.70 385.30C199.43 381.26 199.80 375.82 200.20 372.10C200.49 369.37 200.59 367.85 200.90 365.00C201.36 360.68 202.26 354.30 202.80 348.70C203.37 342.78 203.65 336.73 204.20 330.40C204.80 323.57 205.67 315.47 206.30 309.10C206.81 303.92 207.35 301.04 207.70 295.00C208.32 284.24 208.07 264.50 208.40 250.00C208.71 236.43 209.06 224.21 209.60 210.60C210.18 195.95 210.56 175.22 211.80 165.00C212.43 159.76 213.25 153.22 214.10 153.20C214.95 153.18 216.12 159.75 216.90 165.00C218.40 175.12 218.72 195.44 219.70 210.00C220.62 223.73 221.81 239.63 222.60 250.00C223.10 256.60 223.28 260.82 223.90 266.20C224.52 271.59 225.48 277.08 226.30 282.30C227.08 287.26 227.87 292.46 228.70 296.80C229.38 300.37 229.86 303.45 230.80 306.50C231.69 309.36 233.01 311.47 234.10 314.60C235.54 318.72 237.08 323.85 238.40 329.20C239.97 335.56 240.99 343.62 242.60 350.30C244.09 356.46 245.65 362.30 247.60 367.90C249.45 373.21 251.82 377.93 253.90 383.10C256.05 388.45 258.00 394.60 260.30 399.50C262.28 403.72 264.73 406.94 266.60 410.90C268.51 414.94 270.10 419.39 271.60 423.50C273.01 427.35 273.70 431.69 275.40 434.80C276.81 437.38 278.57 439.67 280.50 441.20C282.16 442.52 284.10 443.17 286.00 443.80C287.87 444.43 289.87 444.60 291.80 445.00" stroke="#1e7a1e" stroke-width="1.8" fill="none" stroke-linejoin="round" stroke-linecap="round"/><path d="M205.00 446.90C206.47 446.80 207.81 446.96 209.40 446.60C211.43 446.13 213.88 444.89 216.10 443.90C218.35 442.89 220.63 441.74 222.80 440.60C224.90 439.50 226.92 438.53 228.90 437.20C230.99 435.79 232.95 434.07 235.00 432.30C237.21 430.39 239.43 427.70 241.70 426.10C243.64 424.73 245.55 423.82 247.60 423.00C249.65 422.18 251.86 421.62 254.00 421.20C256.09 420.79 258.13 420.92 260.30 420.50C262.71 420.03 265.49 419.87 267.80 418.40C270.62 416.61 272.92 412.68 275.40 409.60C277.99 406.39 280.29 402.34 283.00 399.50C285.40 396.99 288.28 394.25 290.60 393.20C292.16 392.49 293.44 392.93 295.00 392.50C296.89 391.98 299.20 391.36 301.10 390.10C303.27 388.66 305.23 386.43 307.10 384.00C309.31 381.12 311.20 377.20 313.20 373.70C315.24 370.13 317.14 366.29 319.20 362.80C321.17 359.47 322.98 355.75 325.30 353.20C327.29 351.02 329.71 348.44 331.90 348.10C333.74 347.81 335.66 348.93 337.40 350.10C339.55 351.55 341.46 354.38 343.40 356.80C345.50 359.41 347.34 362.88 349.50 365.30C351.40 367.42 353.11 369.24 355.50 370.70C358.18 372.33 361.80 373.33 365.00 374.30C368.13 375.25 371.73 375.51 374.50 376.50C376.81 377.32 378.40 378.10 380.60 379.50C383.64 381.43 387.20 384.73 390.70 387.60C394.57 390.76 398.95 395.75 402.80 397.70C405.60 399.12 408.19 399.55 410.90 399.70C413.59 399.84 416.30 399.00 419.00 398.60C421.70 398.20 424.64 397.03 427.10 397.30C429.29 397.54 431.17 398.54 433.10 399.70C435.28 401.01 437.15 403.26 439.40 405.00C441.82 406.87 444.27 409.70 447.20 410.50C450.22 411.33 454.37 409.30 457.30 409.70C459.69 410.03 461.40 410.65 463.60 412.00C466.77 413.94 470.64 418.27 473.75 421.40C476.60 424.27 478.71 427.79 481.60 430.00C484.24 432.01 487.21 434.02 490.20 434.40C493.17 434.77 496.87 431.90 499.50 432.30C501.65 432.63 503.11 434.04 505.00 435.50C507.49 437.42 509.69 441.62 512.80 443.30C515.93 445.00 519.76 445.02 523.75 445.60C528.48 446.29 534.18 446.47 539.40 446.90" stroke="#6cc644" stroke-width="1.8" fill="none" stroke-linejoin="round" stroke-linecap="round"/><path d="M554.4 123.50H564.2" stroke="#f05a30" stroke-width="1.3"/><path d="M554.4 134.18H564.2" stroke="#3a7fd6" stroke-width="1.3"/><path d="M554.4 144.86H564.2" stroke="#86c2ee" stroke-width="1.3"/><path d="M554.4 155.54H564.2" stroke="#3f8f3f" stroke-width="1.3"/><path d="M554.4 166.22H564.2" stroke="#86d46a" stroke-width="1.3"/></svg>
<div style="position:absolute;left:565.8px;top:121.82px;font-size:5.36px;line-height:5.36px;color:#333;font-weight:normal;white-space:pre;font-family:'Liberation Sans', sans-serif;will-change:transform;-webkit-text-stroke:0.1px #333;">Pond Route 1-Hr</div>
<div style="position:absolute;left:565.8px;top:132.50px;font-size:5.36px;line-height:5.36px;color:#333;font-weight:normal;white-space:pre;font-family:'Liberation Sans', sans-serif;will-change:transform;-webkit-text-stroke:0.1px #333;">Pond Route 2-Hr</div>
<div style="position:absolute;left:565.8px;top:143.18px;font-size:5.36px;line-height:5.36px;color:#333;font-weight:normal;white-space:pre;font-family:'Liberation Sans', sans-serif;will-change:transform;-webkit-text-stroke:0.1px #333;">Pond Route 4-Hr</div>
<div style="position:absolute;left:565.8px;top:153.86px;font-size:5.36px;line-height:5.36px;color:#333;font-weight:normal;white-space:pre;font-family:'Liberation Sans', sans-serif;will-change:transform;-webkit-text-stroke:0.1px #333;">Pond Route 8-Hr</div>
<div style="position:absolute;left:565.8px;top:164.54px;font-size:5.36px;line-height:5.36px;color:#333;font-weight:normal;white-space:pre;font-family:'Liberation Sans', sans-serif;will-change:transform;-webkit-text-stroke:0.1px #333;">Pond Route 24-Hr</div>
<div style="position:absolute;right:619.2px;top:445.65px;font-size:5.3px;line-height:5.3px;color:#444;font-weight:normal;white-space:pre;font-family:'Liberation Sans', sans-serif;will-change:transform;-webkit-text-stroke:0.1px #444;">0</div>
<div style="position:absolute;right:619.2px;top:432.96px;font-size:5.3px;line-height:5.3px;color:#444;font-weight:normal;white-space:pre;font-family:'Liberation Sans', sans-serif;will-change:transform;-webkit-text-stroke:0.1px #444;">1</div>
<div style="position:absolute;right:619.2px;top:420.27px;font-size:5.3px;line-height:5.3px;color:#444;font-weight:normal;white-space:pre;font-family:'Liberation Sans', sans-serif;will-change:transform;-webkit-text-stroke:0.1px #444;">2</div>
<div style="position:absolute;right:619.2px;top:407.58px;font-size:5.3px;line-height:5.3px;color:#444;font-weight:normal;white-space:pre;font-family:'Liberation Sans', sans-serif;will-change:transform;-webkit-text-stroke:0.1px #444;">3</div>
<div style="position:absolute;right:619.2px;top:394.89px;font-size:5.3px;line-height:5.3px;color:#444;font-weight:normal;white-space:pre;font-family:'Liberation Sans', sans-serif;will-change:transform;-webkit-text-stroke:0.1px #444;">4</div>
<div style="position:absolute;right:619.2px;top:382.20px;font-size:5.3px;line-height:5.3px;color:#444;font-weight:normal;white-space:pre;font-family:'Liberation Sans', sans-serif;will-change:transform;-webkit-text-stroke:0.1px #444;">5</div>
<div style="position:absolute;right:619.2px;top:369.51px;font-size:5.3px;line-height:5.3px;color:#444;font-weight:normal;white-space:pre;font-family:'Liberation Sans', sans-serif;will-change:transform;-webkit-text-stroke:0.1px #444;">6</div>
<div style="position:absolute;right:619.2px;top:356.82px;font-size:5.3px;line-height:5.3px;color:#444;font-weight:normal;white-space:pre;font-family:'Liberation Sans', sans-serif;will-change:transform;-webkit-text-stroke:0.1px #444;">7</div>
<div style="position:absolute;right:619.2px;top:344.13px;font-size:5.3px;line-height:5.3px;color:#444;font-weight:normal;white-space:pre;font-family:'Liberation Sans', sans-serif;will-change:transform;-webkit-text-stroke:0.1px #444;">8</div>
<div style="position:absolute;right:619.2px;top:331.44px;font-size:5.3px;line-height:5.3px;color:#444;font-weight:normal;white-space:pre;font-family:'Liberation Sans', sans-serif;will-change:transform;-webkit-text-stroke:0.1px #444;">9</div>
<div style="position:absolute;right:619.2px;top:318.75px;font-size:5.3px;line-height:5.3px;color:#444;font-weight:normal;white-space:pre;font-family:'Liberation Sans', sans-serif;will-change:transform;-webkit-text-stroke:0.1px #444;">10</div>
<div style="position:absolute;right:619.2px;top:306.06px;font-size:5.3px;line-height:5.3px;color:#444;font-weight:normal;white-space:pre;font-family:'Liberation Sans', sans-serif;will-change:transform;-webkit-text-stroke:0.1px #444;">11</div>
<div style="position:absolute;right:619.2px;top:293.37px;font-size:5.3px;line-height:5.3px;color:#444;font-weight:normal;white-space:pre;font-family:'Liberation Sans', sans-serif;will-change:transform;-webkit-text-stroke:0.1px #444;">12</div>
<div style="position:absolute;right:619.2px;top:280.68px;font-size:5.3px;line-height:5.3px;color:#444;font-weight:normal;white-space:pre;font-family:'Liberation Sans', sans-serif;will-change:transform;-webkit-text-stroke:0.1px #444;">13</div>
<div style="position:absolute;right:619.2px;top:267.99px;font-size:5.3px;line-height:5.3px;color:#444;font-weight:normal;white-space:pre;font-family:'Liberation Sans', sans-serif;will-change:transform;-webkit-text-stroke:0.1px #444;">14</div>
<div style="position:absolute;right:619.2px;top:255.30px;font-size:5.3px;line-height:5.3px;color:#444;font-weight:normal;white-space:pre;font-family:'Liberation Sans', sans-serif;will-change:transform;-webkit-text-stroke:0.1px #444;">15</div>
<div style="position:absolute;right:619.2px;top:242.61px;font-size:5.3px;line-height:5.3px;color:#444;font-weight:normal;white-space:pre;font-family:'Liberation Sans', sans-serif;will-change:transform;-webkit-text-stroke:0.1px #444;">16</div>
<div style="position:absolute;right:619.2px;top:229.92px;font-size:5.3px;line-height:5.3px;color:#444;font-weight:normal;white-space:pre;font-family:'Liberation Sans', sans-serif;will-change:transform;-webkit-text-stroke:0.1px #444;">17</div>
<div style="position:absolute;right:619.2px;top:217.23px;font-size:5.3px;line-height:5.3px;color:#444;font-weight:normal;white-space:pre;font-family:'Liberation Sans', sans-serif;will-change:transform;-webkit-text-stroke:0.1px #444;">18</div>
<div style="position:absolute;right:619.2px;top:204.54px;font-size:5.3px;line-height:5.3px;color:#444;font-weight:normal;white-space:pre;font-family:'Liberation Sans', sans-serif;will-change:transform;-webkit-text-stroke:0.1px #444;">19</div>
<div style="position:absolute;right:619.2px;top:191.85px;font-size:5.3px;line-height:5.3px;color:#444;font-weight:normal;white-space:pre;font-family:'Liberation Sans', sans-serif;will-change:transform;-webkit-text-stroke:0.1px #444;">20</div>
<div style="position:absolute;right:619.2px;top:179.16px;font-size:5.3px;line-height:5.3px;color:#444;font-weight:normal;white-space:pre;font-family:'Liberation Sans', sans-serif;will-change:transform;-webkit-text-stroke:0.1px #444;">21</div>
<div style="position:absolute;right:619.2px;top:166.47px;font-size:5.3px;line-height:5.3px;color:#444;font-weight:normal;white-space:pre;font-family:'Liberation Sans', sans-serif;will-change:transform;-webkit-text-stroke:0.1px #444;">22</div>
<div style="position:absolute;right:619.2px;top:153.78px;font-size:5.3px;line-height:5.3px;color:#444;font-weight:normal;white-space:pre;font-family:'Liberation Sans', sans-serif;will-change:transform;-webkit-text-stroke:0.1px #444;">23</div>
<div style="position:absolute;right:619.2px;top:141.09px;font-size:5.3px;line-height:5.3px;color:#444;font-weight:normal;white-space:pre;font-family:'Liberation Sans', sans-serif;will-change:transform;-webkit-text-stroke:0.1px #444;">24</div>
<div style="position:absolute;right:619.2px;top:128.40px;font-size:5.3px;line-height:5.3px;color:#444;font-weight:normal;white-space:pre;font-family:'Liberation Sans', sans-serif;will-change:transform;-webkit-text-stroke:0.1px #444;">25</div>
<div style="position:absolute;right:619.2px;top:115.71px;font-size:5.3px;line-height:5.3px;color:#444;font-weight:normal;white-space:pre;font-family:'Liberation Sans', sans-serif;will-change:transform;-webkit-text-stroke:0.1px #444;">26</div>
<div style="position:absolute;left:52.0px;width:200px;text-align:center;top:451.85px;font-size:5.3px;line-height:5.3px;color:#444;font-weight:normal;white-space:pre;font-family:'Liberation Sans', sans-serif;will-change:transform;-webkit-text-stroke:0.1px #444;">0</div>
<div style="position:absolute;left:66.61500000000001px;width:200px;text-align:center;top:451.85px;font-size:5.3px;line-height:5.3px;color:#444;font-weight:normal;white-space:pre;font-family:'Liberation Sans', sans-serif;will-change:transform;-webkit-text-stroke:0.1px #444;">1</div>
<div style="position:absolute;left:81.22999999999999px;width:200px;text-align:center;top:451.85px;font-size:5.3px;line-height:5.3px;color:#444;font-weight:normal;white-space:pre;font-family:'Liberation Sans', sans-serif;will-change:transform;-webkit-text-stroke:0.1px #444;">2</div>
<div style="position:absolute;left:95.845px;width:200px;text-align:center;top:451.85px;font-size:5.3px;line-height:5.3px;color:#444;font-weight:normal;white-space:pre;font-family:'Liberation Sans', sans-serif;will-change:transform;-webkit-text-stroke:0.1px #444;">3</div>
<div style="position:absolute;left:110.46000000000001px;width:200px;text-align:center;top:451.85px;font-size:5.3px;line-height:5.3px;color:#444;font-weight:normal;white-space:pre;font-family:'Liberation Sans', sans-serif;will-change:transform;-webkit-text-stroke:0.1px #444;">4</div>
<div style="position:absolute;left:125.07499999999999px;width:200px;text-align:center;top:451.85px;font-size:5.3px;line-height:5.3px;color:#444;font-weight:normal;white-space:pre;font-family:'Liberation Sans', sans-serif;will-change:transform;-webkit-text-stroke:0.1px #444;">5</div>
<div style="position:absolute;left:139.69px;width:200px;text-align:center;top:451.85px;font-size:5.3px;line-height:5.3px;color:#444;font-weight:normal;white-space:pre;font-family:'Liberation Sans', sans-serif;will-change:transform;-webkit-text-stroke:0.1px #444;">6</div>
<div style="position:absolute;left:154.305px;width:200px;text-align:center;top:451.85px;font-size:5.3px;line-height:5.3px;color:#444;font-weight:normal;white-space:pre;font-family:'Liberation Sans', sans-serif;will-change:transform;-webkit-text-stroke:0.1px #444;">7</div>
<div style="position:absolute;left:168.92000000000002px;width:200px;text-align:center;top:451.85px;font-size:5.3px;line-height:5.3px;color:#444;font-weight:normal;white-space:pre;font-family:'Liberation Sans', sans-serif;will-change:transform;-webkit-text-stroke:0.1px #444;">8</div>
<div style="position:absolute;left:183.53499999999997px;width:200px;text-align:center;top:451.85px;font-size:5.3px;line-height:5.3px;color:#444;font-weight:normal;white-space:pre;font-family:'Liberation Sans', sans-serif;will-change:transform;-webkit-text-stroke:0.1px #444;">9</div>
<div style="position:absolute;left:198.14999999999998px;width:200px;text-align:center;top:451.85px;font-size:5.3px;line-height:5.3px;color:#444;font-weight:normal;white-space:pre;font-family:'Liberation Sans', sans-serif;will-change:transform;-webkit-text-stroke:0.1px #444;">10</div>
<div style="position:absolute;left:212.765px;width:200px;text-align:center;top:451.85px;font-size:5.3px;line-height:5.3px;color:#444;font-weight:normal;white-space:pre;font-family:'Liberation Sans', sans-serif;will-change:transform;-webkit-text-stroke:0.1px #444;">11</div>
<div style="position:absolute;left:227.38px;width:200px;text-align:center;top:451.85px;font-size:5.3px;line-height:5.3px;color:#444;font-weight:normal;white-space:pre;font-family:'Liberation Sans', sans-serif;will-change:transform;-webkit-text-stroke:0.1px #444;">12</div>
<div style="position:absolute;left:241.995px;width:200px;text-align:center;top:451.85px;font-size:5.3px;line-height:5.3px;color:#444;font-weight:normal;white-space:pre;font-family:'Liberation Sans', sans-serif;will-change:transform;-webkit-text-stroke:0.1px #444;">13</div>
<div style="position:absolute;left:256.61px;width:200px;text-align:center;top:451.85px;font-size:5.3px;line-height:5.3px;color:#444;font-weight:normal;white-space:pre;font-family:'Liberation Sans', sans-serif;will-change:transform;-webkit-text-stroke:0.1px #444;">14</div>
<div style="position:absolute;left:271.225px;width:200px;text-align:center;top:451.85px;font-size:5.3px;line-height:5.3px;color:#444;font-weight:normal;white-space:pre;font-family:'Liberation Sans', sans-serif;will-change:transform;-webkit-text-stroke:0.1px #444;">15</div>
<div style="position:absolute;left:285.84000000000003px;width:200px;text-align:center;top:451.85px;font-size:5.3px;line-height:5.3px;color:#444;font-weight:normal;white-space:pre;font-family:'Liberation Sans', sans-serif;will-change:transform;-webkit-text-stroke:0.1px #444;">16</div>
<div style="position:absolute;left:300.45500000000004px;width:200px;text-align:center;top:451.85px;font-size:5.3px;line-height:5.3px;color:#444;font-weight:normal;white-space:pre;font-family:'Liberation Sans', sans-serif;will-change:transform;-webkit-text-stroke:0.1px #444;">17</div>
<div style="position:absolute;left:315.07px;width:200px;text-align:center;top:451.85px;font-size:5.3px;line-height:5.3px;color:#444;font-weight:normal;white-space:pre;font-family:'Liberation Sans', sans-serif;will-change:transform;-webkit-text-stroke:0.1px #444;">18</div>
<div style="position:absolute;left:329.685px;width:200px;text-align:center;top:451.85px;font-size:5.3px;line-height:5.3px;color:#444;font-weight:normal;white-space:pre;font-family:'Liberation Sans', sans-serif;will-change:transform;-webkit-text-stroke:0.1px #444;">19</div>
<div style="position:absolute;left:344.3px;width:200px;text-align:center;top:451.85px;font-size:5.3px;line-height:5.3px;color:#444;font-weight:normal;white-space:pre;font-family:'Liberation Sans', sans-serif;will-change:transform;-webkit-text-stroke:0.1px #444;">20</div>
<div style="position:absolute;left:358.915px;width:200px;text-align:center;top:451.85px;font-size:5.3px;line-height:5.3px;color:#444;font-weight:normal;white-space:pre;font-family:'Liberation Sans', sans-serif;will-change:transform;-webkit-text-stroke:0.1px #444;">21</div>
<div style="position:absolute;left:373.53000000000003px;width:200px;text-align:center;top:451.85px;font-size:5.3px;line-height:5.3px;color:#444;font-weight:normal;white-space:pre;font-family:'Liberation Sans', sans-serif;will-change:transform;-webkit-text-stroke:0.1px #444;">22</div>
<div style="position:absolute;left:388.145px;width:200px;text-align:center;top:451.85px;font-size:5.3px;line-height:5.3px;color:#444;font-weight:normal;white-space:pre;font-family:'Liberation Sans', sans-serif;will-change:transform;-webkit-text-stroke:0.1px #444;">23</div>
<div style="position:absolute;left:402.76px;width:200px;text-align:center;top:451.85px;font-size:5.3px;line-height:5.3px;color:#444;font-weight:normal;white-space:pre;font-family:'Liberation Sans', sans-serif;will-change:transform;-webkit-text-stroke:0.1px #444;">24</div>
<div style="position:absolute;left:417.375px;width:200px;text-align:center;top:451.85px;font-size:5.3px;line-height:5.3px;color:#444;font-weight:normal;white-space:pre;font-family:'Liberation Sans', sans-serif;will-change:transform;-webkit-text-stroke:0.1px #444;">25</div>
<div style="position:absolute;left:431.99px;width:200px;text-align:center;top:451.85px;font-size:5.3px;line-height:5.3px;color:#444;font-weight:normal;white-space:pre;font-family:'Liberation Sans', sans-serif;will-change:transform;-webkit-text-stroke:0.1px #444;">26</div>
<div style="position:absolute;left:446.605px;width:200px;text-align:center;top:451.85px;font-size:5.3px;line-height:5.3px;color:#444;font-weight:normal;white-space:pre;font-family:'Liberation Sans', sans-serif;will-change:transform;-webkit-text-stroke:0.1px #444;">27</div>
<div style="position:absolute;left:249.39999999999998px;width:200px;text-align:center;top:459.15px;font-size:5.3px;line-height:5.3px;color:#444;font-weight:normal;white-space:pre;font-family:'Liberation Sans', sans-serif;will-change:transform;-webkit-text-stroke:0.1px #444;">Time (hrs)</div>
<div style="position:absolute;left:109.1px;top:279px;width:60px;height:6px;line-height:6px;text-align:center;font-size:5.3px;color:#444;font-family:'Liberation Sans', sans-serif;transform:rotate(-90deg);white-space:pre">Q (cfs)</div>
<div style="position:absolute;left:134.7px;top:465.85px;font-size:5.9px;line-height:5.9px;color:#556;font-weight:normal;white-space:pre;font-family:'Liberation Serif', serif;will-change:transform;-webkit-text-stroke:0.0px #556;font-style:italic">Center of mass detention time = 34 min</div>
<div style="position:absolute;left:625.7px;top:80.2px;width:138.8px;height:301.2px;background:#475a7e;border-radius:3px"></div>
<div style="position:absolute;left:632px;top:87.67px;font-size:7.06px;line-height:7.06px;color:#fff;font-weight:bold;white-space:pre;font-family:'Liberation Sans', sans-serif;will-change:transform;-webkit-text-stroke:0.0px #fff;">Pond Route</div>
<svg style="position:absolute;left:741px;top:83.5px" width="15" height="15" viewBox="0 0 15 15"><rect x="1.5" y="1.5" width="3" height="8" fill="#5a7060" opacity="0.35"/><rect x="10.5" y="1.5" width="3" height="8" fill="#5a7060" opacity="0.35"/><path d="M2.6 6.5 L4.2 9.6 L4.6 6.8 Z M12.4 6.5 L10.8 9.6 L10.4 6.8 Z" fill="#8cc828"/><path d="M5.6 1.2 Q7.5 0.8 9.9 1.2 L10.3 10.2 L4.9 10.2 Z" fill="#4aa6ee"/><path d="M7.2 2 V9.6" stroke="#7cc4f6" stroke-width="0.6" opacity="0.7"/><ellipse cx="7.5" cy="11.5" rx="6.7" ry="2.6" fill="#4aaaf2"/><ellipse cx="7.5" cy="11.1" rx="4.6" ry="1.3" fill="none" stroke="#8fd0fa" stroke-width="0.4"/></svg>
<div style="position:absolute;right:84.29999999999995px;top:105.75px;font-size:5.5px;line-height:5.5px;color:#e6eaf2;font-weight:normal;white-space:pre;font-family:'Liberation Sans', sans-serif;will-change:transform;-webkit-text-stroke:0.0px #e6eaf2;">Hydrograph No</div>
<div style="position:absolute;left:686.3px;top:101.2px;width:52.6px;height:13.6px;border:0.8px solid #e4e8ef;box-sizing:border-box"></div>
<div style="position:absolute;left:612.6px;width:200px;text-align:center;top:105.95px;font-size:5.3px;line-height:5.3px;color:#e6eaf2;font-weight:normal;white-space:pre;font-family:'Liberation Sans', sans-serif;will-change:transform;-webkit-text-stroke:0.0px #e6eaf2;">6</div>
<div style="position:absolute;right:84.29999999999995px;top:128.85px;font-size:5.5px;line-height:5.5px;color:#e6eaf2;font-weight:normal;white-space:pre;font-family:'Liberation Sans', sans-serif;will-change:transform;-webkit-text-stroke:0.0px #e6eaf2;">Name Prefix</div>
<div style="position:absolute;left:686.3px;top:117.4px;width:52.6px;height:27.3px;border:0.8px solid #e4e8ef;box-sizing:border-box"></div>
<div style="position:absolute;left:689.3499999999999px;top:121.05px;width:4.9px;height:4.9px;border-radius:50%;background:#fff"></div>
<div style="position:absolute;left:697.2px;top:121.50px;font-size:5.4px;line-height:5.4px;color:#e6eaf2;font-weight:normal;white-space:pre;font-family:'Liberation Sans', sans-serif;will-change:transform;-webkit-text-stroke:0.0px #e6eaf2;">Pre</div>
<div style="position:absolute;left:689.3499999999999px;top:128.75px;width:4.9px;height:4.9px;border-radius:50%;background:#fff"></div>
<div style="position:absolute;left:697.2px;top:129.20px;font-size:5.4px;line-height:5.4px;color:#e6eaf2;font-weight:normal;white-space:pre;font-family:'Liberation Sans', sans-serif;will-change:transform;-webkit-text-stroke:0.0px #e6eaf2;">Post</div>
<div style="position:absolute;left:689.3499999999999px;top:136.15px;width:4.9px;height:4.9px;border-radius:50%;background:#fff"></div>
<div style="position:absolute;left:690.5999999999999px;top:137.4px;width:2.4px;height:2.4px;border-radius:50%;background:#222"></div>
<div style="position:absolute;left:697.2px;top:136.60px;font-size:5.4px;line-height:5.4px;color:#e6eaf2;font-weight:normal;white-space:pre;font-family:'Liberation Sans', sans-serif;will-change:transform;-webkit-text-stroke:0.0px #e6eaf2;">None</div>
<div style="position:absolute;right:84.29999999999995px;top:149.25px;font-size:5.5px;line-height:5.5px;color:#e6eaf2;font-weight:normal;white-space:pre;font-family:'Liberation Sans', sans-serif;will-change:transform;-webkit-text-stroke:0.0px #e6eaf2;">Name</div>
<div style="position:absolute;left:686.3px;top:147.1px;width:52.6px;height:8.7px;background:#fff"></div>
<div style="position:absolute;left:687.8px;top:149.45px;font-size:5.3px;line-height:5.3px;color:#222;font-weight:normal;white-space:pre;font-family:'Liberation Sans', sans-serif;will-change:transform;-webkit-text-stroke:0.1px #222;">Pond Route 1-Hr</div>
<div style="position:absolute;right:84.29999999999995px;top:161.35px;font-size:5.5px;line-height:5.5px;color:#e6eaf2;font-weight:normal;white-space:pre;font-family:'Liberation Sans', sans-serif;will-change:transform;-webkit-text-stroke:0.0px #e6eaf2;">Inflow Hyd</div>
<div style="position:absolute;left:686.3px;top:158.9px;width:68.7px;height:9.2px;background:linear-gradient(#f2f2f2,#e2e2e2)"></div>
<div style="position:absolute;left:688.9px;top:161.55px;font-size:5.3px;line-height:5.3px;color:#222;font-weight:normal;white-space:pre;font-family:'Liberation Sans', sans-serif;will-change:transform;-webkit-text-stroke:0.1px #222;">1 - FDOT 1-HR</div>
<svg style="position:absolute;left:749.8px;top:162.8px" width="3" height="2" viewBox="0 0 3 2"><path d="M0.2 0.2 L1.5 1.6 L2.8 0.2" fill="none" stroke="#777" stroke-width="0.6"/></svg>
<div style="position:absolute;right:84.29999999999995px;top:172.65px;font-size:5.5px;line-height:5.5px;color:#e6eaf2;font-weight:normal;white-space:pre;font-family:'Liberation Sans', sans-serif;will-change:transform;-webkit-text-stroke:0.0px #e6eaf2;">Pond Name</div>
<div style="position:absolute;left:686.3px;top:170px;width:52.2px;height:9.6px;background:linear-gradient(#f2f2f2,#e2e2e2)"></div>
<div style="position:absolute;left:688.9px;top:172.85px;font-size:5.3px;line-height:5.3px;color:#222;font-weight:normal;white-space:pre;font-family:'Liberation Sans', sans-serif;will-change:transform;-webkit-text-stroke:0.1px #222;">1 - Pond1</div>
<svg style="position:absolute;left:732.8px;top:174.2px" width="3" height="2" viewBox="0 0 3 2"><path d="M0.2 0.2 L1.5 1.6 L2.8 0.2" fill="none" stroke="#777" stroke-width="0.6"/></svg>
<div style="position:absolute;left:740.4px;top:170px;width:14.6px;height:9.6px;background:linear-gradient(#ececec,#dedede)"></div>
<svg style="position:absolute;left:743px;top:171px" width="10" height="8" viewBox="0 0 10 8"><path d="M1.4 1.2 H4.2 V7 H1.4 Z M4.2 4.6 H8.2 Q8.8 4.6 8.8 5.4 V7 H4.2 Z" fill="#38aaf2"/><path d="M3.6 0.8 L4 7.2" stroke="#2a3a4a" stroke-width="0.6"/></svg>
<div style="position:absolute;right:84.29999999999995px;top:197.85px;font-size:5.5px;line-height:5.5px;color:#e6eaf2;font-weight:normal;white-space:pre;font-family:'Liberation Sans', sans-serif;will-change:transform;-webkit-text-stroke:0.0px #e6eaf2;">Route Option</div>
<div style="position:absolute;left:686.3px;top:182.2px;width:52.6px;height:36.8px;border:0.8px solid #e4e8ef;box-sizing:border-box"></div>
<div style="position:absolute;left:689.3499999999999px;top:185.85000000000002px;width:4.9px;height:4.9px;border-radius:50%;background:#fff"></div>
<div style="position:absolute;left:690.5999999999999px;top:187.10000000000002px;width:2.4px;height:2.4px;border-radius:50%;background:#222"></div>
<div style="position:absolute;left:697.2px;top:186.30px;font-size:5.4px;line-height:5.4px;color:#e6eaf2;font-weight:normal;white-space:pre;font-family:'Liberation Sans', sans-serif;will-change:transform;-webkit-text-stroke:0.0px #e6eaf2;">Standard</div>
<div style="position:absolute;left:689.3499999999999px;top:194.15px;width:4.9px;height:4.9px;border-radius:50%;background:#fff"></div>
<div style="position:absolute;left:697.2px;top:194.60px;font-size:5.4px;line-height:5.4px;color:#e6eaf2;font-weight:normal;white-space:pre;font-family:'Liberation Sans', sans-serif;will-change:transform;-webkit-text-stroke:0.0px #e6eaf2;">Interconnected</div>
<div style="position:absolute;left:689.3499999999999px;top:202.15px;width:4.9px;height:4.9px;border-radius:50%;background:#fff"></div>
<div style="position:absolute;left:697.2px;top:202.60px;font-size:5.4px;line-height:5.4px;color:#e6eaf2;font-weight:normal;white-space:pre;font-family:'Liberation Sans', sans-serif;will-change:transform;-webkit-text-stroke:0.0px #e6eaf2;">Wet Pond</div>
<div style="position:absolute;left:689.3499999999999px;top:210.35000000000002px;width:4.9px;height:4.9px;border-radius:50%;background:#fff"></div>
<div style="position:absolute;left:697.2px;top:210.80px;font-size:5.4px;line-height:5.4px;color:#e6eaf2;font-weight:normal;white-space:pre;font-family:'Liberation Sans', sans-serif;will-change:transform;-webkit-text-stroke:0.0px #e6eaf2;">Tailwater</div>
<div style="position:absolute;left:695.5px;top:200.8px;width:42px;height:7.6px;border:0.5px solid #3a4868;box-sizing:border-box"></div>
<div style="position:absolute;left:686.3px;top:223px;width:52.6px;height:10.8px;background:linear-gradient(#efefef,#dcdcdc);border:0.8px solid #3a8ee6;box-sizing:border-box;border-radius:1.2px"></div>
<div style="position:absolute;left:612.6px;width:200px;text-align:center;top:226.45px;font-size:5.3px;line-height:5.3px;color:#333;font-weight:normal;white-space:pre;font-family:'Liberation Sans', sans-serif;will-change:transform;-webkit-text-stroke:0.1px #333;">Compute</div>
<div style="position:absolute;left:626px;top:385.2px;width:138.5px;height:95.9px;background:#fff;border-radius:2px;overflow:hidden"></div>
<div style="position:absolute;left:626px;top:385.2px;width:26.1px;height:30.8px;background:linear-gradient(#f4f4f4,#e4e4e4)"></div>
<div style="position:absolute;left:652.1px;top:385.2px;width:112.4px;height:12.6px;background:linear-gradient(#f6f6f6,#e6e6e6);border-bottom:0.5px solid #d8d8d8;box-sizing:border-box"></div>
<div style="position:absolute;left:607.4px;width:200px;text-align:center;top:389.30px;font-size:5.4px;line-height:5.4px;color:#222;font-weight:bold;white-space:pre;font-family:'Liberation Sans', sans-serif;will-change:transform;-webkit-text-stroke:0.1px #222;">Pond Route - Quick Results</div>
<div style="position:absolute;left:652.1px;top:397.8px;width:29.0px;height:18.2px;background:linear-gradient(#f8f8f8,#e6e6e6);border-left:0.5px solid #d6d6d6;box-sizing:border-box"></div>
<div style="position:absolute;left:681.1px;top:397.8px;width:29.100000000000023px;height:18.2px;background:linear-gradient(#f8f8f8,#e6e6e6);border-left:0.5px solid #d6d6d6;box-sizing:border-box"></div>
<div style="position:absolute;left:710.2px;top:397.8px;width:54.299999999999955px;height:18.2px;background:linear-gradient(#f8f8f8,#e6e6e6);border-left:0.5px solid #d6d6d6;box-sizing:border-box"></div>
<div style="position:absolute;left:539.0px;width:200px;text-align:center;top:401.80px;font-size:5.0px;line-height:5.0px;color:#444;font-weight:normal;white-space:pre;font-family:'Liberation Sans', sans-serif;will-change:transform;-webkit-text-stroke:0.1px #444;">Ret Pd</div>
<div style="position:absolute;left:539.0px;width:200px;text-align:center;top:408.60px;font-size:5.0px;line-height:5.0px;color:#444;font-weight:normal;white-space:pre;font-family:'Liberation Sans', sans-serif;will-change:transform;-webkit-text-stroke:0.1px #444;">(Yrs)</div>
<div style="position:absolute;left:566.7px;width:200px;text-align:center;top:401.80px;font-size:5.0px;line-height:5.0px;color:#444;font-weight:normal;white-space:pre;font-family:'Liberation Sans', sans-serif;will-change:transform;-webkit-text-stroke:0.1px #444;">Qpk</div>
<div style="position:absolute;left:566.7px;width:200px;text-align:center;top:408.60px;font-size:5.0px;line-height:5.0px;color:#444;font-weight:normal;white-space:pre;font-family:'Liberation Sans', sans-serif;will-change:transform;-webkit-text-stroke:0.1px #444;">(cfs)</div>
<div style="position:absolute;left:596.3px;width:200px;text-align:center;top:401.80px;font-size:5.0px;line-height:5.0px;color:#444;font-weight:normal;white-space:pre;font-family:'Liberation Sans', sans-serif;will-change:transform;-webkit-text-stroke:0.1px #444;">Tpk</div>
<div style="position:absolute;left:596.3px;width:200px;text-align:center;top:408.60px;font-size:5.0px;line-height:5.0px;color:#444;font-weight:normal;white-space:pre;font-family:'Liberation Sans', sans-serif;will-change:transform;-webkit-text-stroke:0.1px #444;">(hrs)</div>
<div style="position:absolute;left:636.7px;width:200px;text-align:center;top:401.80px;font-size:5.0px;line-height:5.0px;color:#444;font-weight:normal;white-space:pre;font-family:'Liberation Sans', sans-serif;will-change:transform;-webkit-text-stroke:0.1px #444;">Volume</div>
<div style="position:absolute;left:636.7px;width:200px;text-align:center;top:408.60px;font-size:5.0px;line-height:5.0px;color:#444;font-weight:normal;white-space:pre;font-family:'Liberation Sans', sans-serif;will-change:transform;-webkit-text-stroke:0.1px #444;">(cuft)</div>
<div style="position:absolute;left:652.1px;top:416.0px;width:112.4px;height:10.9px;background:#ececec"></div>
<div style="position:absolute;left:626px;top:416.0px;width:26.1px;height:10.9px;background:linear-gradient(90deg,#f0f0f0,#e4e4e4);border-top:0.5px solid #fff;box-sizing:border-box"></div>
<div style="position:absolute;left:681.1px;top:416.0px;width:0.6px;height:10.9px;background:#fff"></div>
<div style="position:absolute;left:710.2px;top:416.0px;width:0.6px;height:10.9px;background:#fff"></div>
<div style="position:absolute;left:539px;width:200px;text-align:center;top:420.00px;font-size:5.2px;line-height:5.2px;color:#333;font-weight:normal;white-space:pre;font-family:'Liberation Sans', sans-serif;will-change:transform;-webkit-text-stroke:0.1px #333;">2</div>
<div style="position:absolute;left:566.7px;width:200px;text-align:center;top:420.00px;font-size:5.2px;line-height:5.2px;color:#333;font-weight:normal;white-space:pre;font-family:'Liberation Sans', sans-serif;will-change:transform;-webkit-text-stroke:0.1px #333;">5.850</div>
<div style="position:absolute;left:596.3px;width:200px;text-align:center;top:420.00px;font-size:5.2px;line-height:5.2px;color:#333;font-weight:normal;white-space:pre;font-family:'Liberation Sans', sans-serif;will-change:transform;-webkit-text-stroke:0.1px #333;">1.13</div>
<div style="position:absolute;left:636.7px;width:200px;text-align:center;top:420.00px;font-size:5.2px;line-height:5.2px;color:#333;font-weight:normal;white-space:pre;font-family:'Liberation Sans', sans-serif;will-change:transform;-webkit-text-stroke:0.1px #333;">19,042</div>
<div style="position:absolute;left:652.1px;top:426.9px;width:112.4px;height:10.9px;background:#fff"></div>
<div style="position:absolute;left:626px;top:426.9px;width:26.1px;height:10.9px;background:linear-gradient(90deg,#f0f0f0,#e4e4e4);border-top:0.5px solid #fff;box-sizing:border-box"></div>
<div style="position:absolute;left:681.1px;top:426.9px;width:0.6px;height:10.9px;background:#fff"></div>
<div style="position:absolute;left:710.2px;top:426.9px;width:0.6px;height:10.9px;background:#fff"></div>
<div style="position:absolute;left:539px;width:200px;text-align:center;top:430.90px;font-size:5.2px;line-height:5.2px;color:#333;font-weight:normal;white-space:pre;font-family:'Liberation Sans', sans-serif;will-change:transform;-webkit-text-stroke:0.1px #333;">10</div>
<div style="position:absolute;left:566.7px;width:200px;text-align:center;top:430.90px;font-size:5.2px;line-height:5.2px;color:#333;font-weight:normal;white-space:pre;font-family:'Liberation Sans', sans-serif;will-change:transform;-webkit-text-stroke:0.1px #333;">9.095</div>
<div style="position:absolute;left:596.3px;width:200px;text-align:center;top:430.90px;font-size:5.2px;line-height:5.2px;color:#333;font-weight:normal;white-space:pre;font-family:'Liberation Sans', sans-serif;will-change:transform;-webkit-text-stroke:0.1px #333;">1.17</div>
<div style="position:absolute;left:636.7px;width:200px;text-align:center;top:430.90px;font-size:5.2px;line-height:5.2px;color:#333;font-weight:normal;white-space:pre;font-family:'Liberation Sans', sans-serif;will-change:transform;-webkit-text-stroke:0.1px #333;">36,854</div>
<div style="position:absolute;left:652.1px;top:437.8px;width:112.4px;height:10.9px;background:#ececec"></div>
<div style="position:absolute;left:626px;top:437.8px;width:26.1px;height:10.9px;background:linear-gradient(90deg,#f0f0f0,#e4e4e4);border-top:0.5px solid #fff;box-sizing:border-box"></div>
<div style="position:absolute;left:681.1px;top:437.8px;width:0.6px;height:10.9px;background:#fff"></div>
<div style="position:absolute;left:710.2px;top:437.8px;width:0.6px;height:10.9px;background:#fff"></div>
<div style="position:absolute;left:539px;width:200px;text-align:center;top:441.80px;font-size:5.2px;line-height:5.2px;color:#333;font-weight:normal;white-space:pre;font-family:'Liberation Sans', sans-serif;will-change:transform;-webkit-text-stroke:0.1px #333;">100</div>
<div style="position:absolute;left:566.7px;width:200px;text-align:center;top:441.80px;font-size:5.2px;line-height:5.2px;color:#333;font-weight:normal;white-space:pre;font-family:'Liberation Sans', sans-serif;will-change:transform;-webkit-text-stroke:0.1px #333;">15.38</div>
<div style="position:absolute;left:596.3px;width:200px;text-align:center;top:441.80px;font-size:5.2px;line-height:5.2px;color:#333;font-weight:normal;white-space:pre;font-family:'Liberation Sans', sans-serif;will-change:transform;-webkit-text-stroke:0.1px #333;">1.17</div>
<div style="position:absolute;left:636.7px;width:200px;text-align:center;top:441.80px;font-size:5.2px;line-height:5.2px;color:#333;font-weight:normal;white-space:pre;font-family:'Liberation Sans', sans-serif;will-change:transform;-webkit-text-stroke:0.1px #333;">64,321</div>
<div style="position:absolute;left:626px;top:471.5px;width:138.5px;height:9.6px;background:#ededed"></div>
<svg style="position:absolute;left:626.5px;top:472.8px" width="8" height="8" viewBox="0 0 8 8"><circle cx="4" cy="4" r="3.3" fill="#fff" stroke="#444" stroke-width="0.6"/><path d="M2.6 3.4 L4 4.8 L5.4 3.4" fill="none" stroke="#333" stroke-width="0.7"/></svg>
<div style="position:absolute;left:636.8px;top:474.90px;font-size:5.4px;line-height:5.4px;color:#444;font-weight:normal;white-space:pre;font-family:'Liberation Sans', sans-serif;will-change:transform;-webkit-text-stroke:0.1px #444;">Quick Results</div>
<div style="position:absolute;left:3.8px;top:486.35px;font-size:5.3px;line-height:5.3px;color:#dfe4ee;font-weight:normal;white-space:pre;font-family:'Liberation Sans', sans-serif;will-change:transform;-webkit-text-stroke:0.0px #dfe4ee;">Florida FDOT - 24 hr</div>
<div style="position:absolute;left:57px;top:486.35px;font-size:5.3px;line-height:5.3px;color:#dfe4ee;font-weight:normal;white-space:pre;font-family:'Liberation Sans', sans-serif;will-change:transform;-webkit-text-stroke:0.0px #dfe4ee;">SampleIDF.idf</div>
<div style="position:absolute;left:97px;top:486.35px;font-size:5.3px;line-height:5.3px;color:#dfe4ee;font-weight:normal;white-space:pre;font-family:'Liberation Sans', sans-serif;will-change:transform;-webkit-text-stroke:0.0px #dfe4ee;">SamplePrecip.pcp</div>
<div style="position:absolute;left:161.25px;top:486.35px;font-size:5.3px;line-height:5.3px;color:#dfe4ee;font-weight:normal;white-space:pre;font-family:'Liberation Sans', sans-serif;will-change:transform;-webkit-text-stroke:0.0px #dfe4ee;">Time Interval = 2 min</div>
<div style="position:absolute;left:219.3px;top:486.35px;font-size:5.3px;line-height:5.3px;color:#dfe4ee;font-weight:normal;white-space:pre;font-family:'Liberation Sans', sans-serif;will-change:transform;-webkit-text-stroke:0.0px #dfe4ee;">Hyd. No. = 6 - Pond Route</div>
<div style="position:absolute;left:57.7px;top:493.6px;width:710.3px;height:1.4px;background:#6f7a8c"></div>
<svg style="position:absolute;left:760px;top:487px" width="8" height="8" viewBox="0 0 8 8"><path d="M7 1 L7 7 L1 7 Z" fill="#7d889a"/></svg>
<div style="position:absolute;left:767px;top:75px;width:1px;height:420px;background:#4a5670"></div>
<div style="position:absolute;left:0px;top:14px;width:0.8px;height:481px;background:#8f97a4"></div></body></html>
